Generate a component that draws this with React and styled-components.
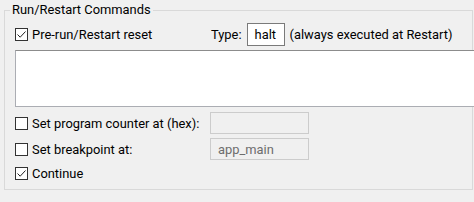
import React from 'react';
import styled, { createGlobalStyle } from 'styled-components';

const GlobalStyle = createGlobalStyle`
  html, body {
    margin: 0;
    padding: 0;
    background: #f0f0f0;
    overflow: hidden;
  }
  body {
    font-family: Roboto, "Liberation Sans", sans-serif;
    font-size: 12.9px;
    color: #000;
  }
`;

const Page = styled.div`
  width: 474px;
  height: 202px;
  padding: 0 1px 0 4px;
  box-sizing: border-box;
`;

const Group = styled.fieldset`
  margin: 0;
  padding: 3px 0 4px 10px;
  border: 1px solid #d9d9d9;
  min-width: 0;
  height: 190px;
  box-sizing: border-box;
`;

const Legend = styled.legend`
  margin-left: -5px;
  padding: 0 2px;
  line-height: 20px;
  color: #000;
`;

const Row = styled.div`
  display: flex;
  align-items: center;
  height: ${p => p.$h || 22}px;
  margin-top: ${p => p.$mt || 0}px;
`;

const CheckLabel = styled.label`
  display: flex;
  align-items: center;
  gap: 4px;
  width: ${p => p.$w || 195}px;
  flex-shrink: 0;
  white-space: nowrap;
`;

const Box = styled.span`
  flex-shrink: 0;
  width: 13px;
  height: 13px;
  box-sizing: border-box;
  border: 1px solid #333;
  background: #fff;
  display: flex;
  align-items: center;
  justify-content: center;
`;

const Text = styled.span`
  white-space: nowrap;
  margin: ${p => p.$m || 0};
  color: #000;
`;

const Field = styled.div`
  flex-shrink: 0;
  box-sizing: border-box;
  width: ${p => p.$w}px;
  height: ${p => p.$h}px;
  border: 1px solid ${p => p.$disabled ? '#cccccc' : '#7a7a7a'};
  background: ${p => p.$disabled ? '#f0f0f0' : '#fff'};
  color: ${p => p.$disabled ? '#6d6d6d' : '#000'};
  padding-left: 7px;
  display: flex;
  align-items: center;
  white-space: nowrap;
`;

const Commands = styled.div`
  box-sizing: border-box;
  margin-top: 4px;
  width: 480px;
  height: 57px;
  background: #fff;
  border: 1px solid #abadb3;
  border-top-color: #8c8c8c;
`;

function Check({ checked }) {
  return (
    <Box>
      {checked && (
        <svg width="11" height="11" viewBox="0 0 11 11">
          <path d="M1.5 5.5 L4.2 8.2 L9.5 2.5" fill="none" stroke="#222" strokeWidth="1" />
        </svg>
      )}
    </Box>
  );
}

export default function App() {
  return (
    <>
      <GlobalStyle />
      <Page>
        <Group>
          <Legend>Run/Restart Commands</Legend>
          <Row $h={23}>
            <CheckLabel>
              <Check checked />
              <Text>Pre-run/Restart reset</Text>
            </CheckLabel>
            <Text $m="0 5px 0 1px">Type:</Text>
            <Field $w={38} $h={23}>halt</Field>
            <Text $m="0 0 0 5px">(always executed at Restart)</Text>
          </Row>
          <Commands />
          <Row $mt={5}>
            <CheckLabel>
              <Check />
              <Text>Set program counter at (hex):</Text>
            </CheckLabel>
            <Field $w={99} $h={22} $disabled />
          </Row>
          <Row $mt={4}>
            <CheckLabel>
              <Check />
              <Text>Set breakpoint at:</Text>
            </CheckLabel>
            <Field $w={99} $h={22} $disabled>app_main</Field>
          </Row>
          <Row $mt={2}>
            <CheckLabel>
              <Check checked />
              <Text>Continue</Text>
            </CheckLabel>
          </Row>
        </Group>
      </Page>
    </>
  );
}
